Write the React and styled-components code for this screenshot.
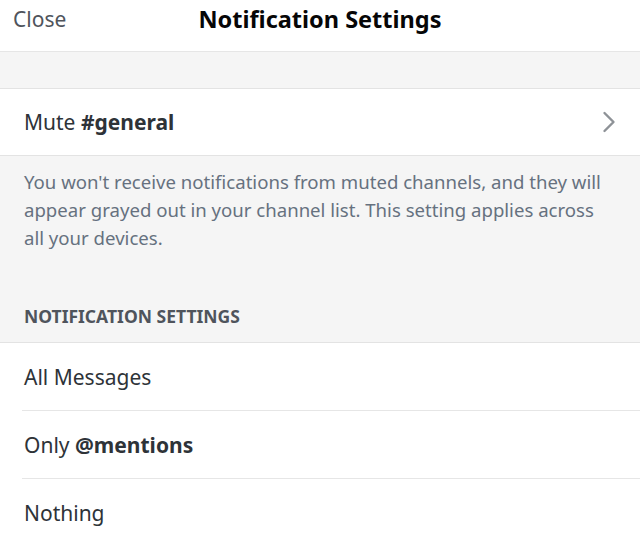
import React from "react";
import styled, { createGlobalStyle } from "styled-components";

const GlobalStyle = createGlobalStyle`
  html, body {
    margin: 0;
    padding: 0;
    background: #ffffff;
    font-family: "Noto Sans", "Open Sans", sans-serif;
  }
`;

const Screen = styled.div`
  width: 640px;
  height: 539px;
  overflow: hidden;
  background: #f5f5f5;
  display: flex;
  flex-direction: column;
`;

const Header = styled.div`
  height: 52px;
  background: #fff;
  border-bottom: 1px solid #e6e6e6;
  display: grid;
  grid-template-columns: 1fr auto 1fr;
  align-items: center;
  padding: 0 13px 13px;
  box-sizing: border-box;
  flex-shrink: 0;
`;

const CloseButton = styled.span`
  font-size: 21px;
  color: #4f545c;
`;

const Title = styled.h1`
  margin: 0;
  font-size: 23.5px;
  font-weight: 700;
  color: #060607;
`;

const Spacer = styled.div`
  height: 36px;
  border-bottom: 1px solid #e3e3e3;
  flex-shrink: 0;
`;

const NavRow = styled.div`
  height: 66px;
  background: #fff;
  border-bottom: 1px solid #e3e3e3;
  display: flex;
  align-items: center;
  justify-content: space-between;
  padding: 0 24px;
  flex-shrink: 0;
`;

const RowText = styled.span`
  font-size: 21px;
  color: #2e3338;
  b {
    font-weight: 700;
  }
`;

const Description = styled.p`
  margin: 0;
  padding: 12px 24px 0;
  font-size: 18.6px;
  line-height: 28px;
  color: #66717f;
  height: 134px;
  box-sizing: border-box;
  flex-shrink: 0;
`;

const SectionTitle = styled.div`
  font-size: 17.5px;
  font-weight: 700;
  color: #4f545c;
  padding: 0 24px;
  height: 52px;
  display: flex;
  align-items: center;
  border-bottom: 1px solid #e3e3e3;
  flex-shrink: 0;
`;

const List = styled.div`
  background: #fff;
  flex: 1;
`;

const OptionRow = styled.div`
  margin-left: 22px;
  padding-left: 2px;
  height: 67px;
  display: flex;
  align-items: center;
  border-bottom: ${(p) => (p.last ? "none" : "1px solid #e6e6e6")};
`;

const Chevron = () => (
  <svg width="14" height="22" viewBox="0 0 14 22" fill="none">
    <path d="M2.5 2l9 9-9 9" stroke="#8e9297" strokeWidth="2.4" strokeLinecap="round" strokeLinejoin="round" />
  </svg>
);

const options = [
  { label: "All Messages" },
  { label: "Only ", bold: "@mentions" },
  { label: "Nothing" },
];

export default function App() {
  return (
    <>
      <GlobalStyle />
      <Screen>
        <Header>
          <CloseButton>Close</CloseButton>
          <Title>Notification Settings</Title>
          <span />
        </Header>
        <Spacer />
        <NavRow>
          <RowText>
            Mute <b>#general</b>
          </RowText>
          <Chevron />
        </NavRow>
        <Description>
          You won't receive notifications from muted channels, and they will appear grayed out in your channel list. This setting applies across all your devices.
        </Description>
        <SectionTitle>NOTIFICATION SETTINGS</SectionTitle>
        <List>
          {options.map((o, i) => (
            <OptionRow key={o.label} last={i === options.length - 1}>
              <RowText>
                {o.label}
                {o.bold && <b>{o.bold}</b>}
              </RowText>
            </OptionRow>
          ))}
        </List>
      </Screen>
    </>
  );
}
